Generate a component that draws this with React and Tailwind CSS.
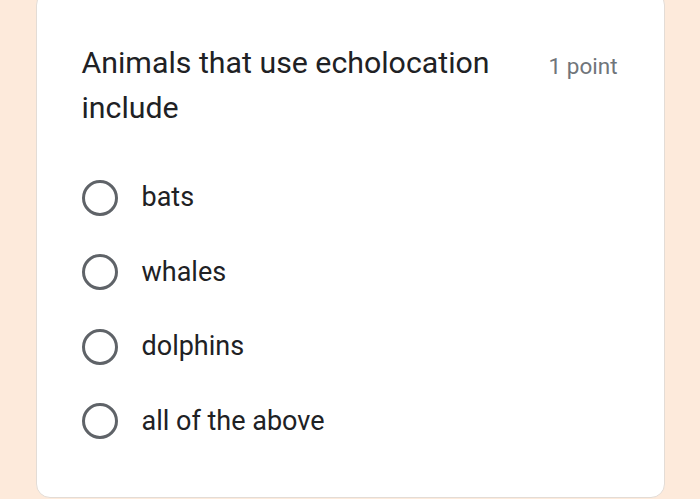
import React from "react";

const options = ["bats", "whales", "dolphins", "all of the above"];

export default function App() {
  return (
    <div
      className="w-[700px] h-[499px] overflow-hidden bg-[#fdeadb] flex justify-center"
      style={{ fontFamily: "Roboto, 'Noto Sans', sans-serif" }}
    >
      <div className="w-[629px] h-[507px] -mt-[9px] bg-white rounded-[14px] border border-[#e3dcd6] pl-[45px] pr-[45px] pt-[48px]">
        <div className="flex justify-between items-start">
          <div className="text-[30.3px] leading-[45px] text-[#202124] w-[430px]">
            Animals that use echolocation include
          </div>
          <div className="text-[22.5px] text-[#70757a] mt-[10px] mr-[1px]">1 point</div>
        </div>
        <div className="mt-[49px] flex flex-col gap-[37.5px]">
          {options.map((o) => (
            <div key={o} className="flex items-center h-[37px]">
              <div className="w-[36px] h-[36px] rounded-full border-[3px] border-[#5f6368]" />
              <span className="ml-[24px] text-[27px] text-[#202124]">{o}</span>
            </div>
          ))}
        </div>
      </div>
    </div>
  );
}
